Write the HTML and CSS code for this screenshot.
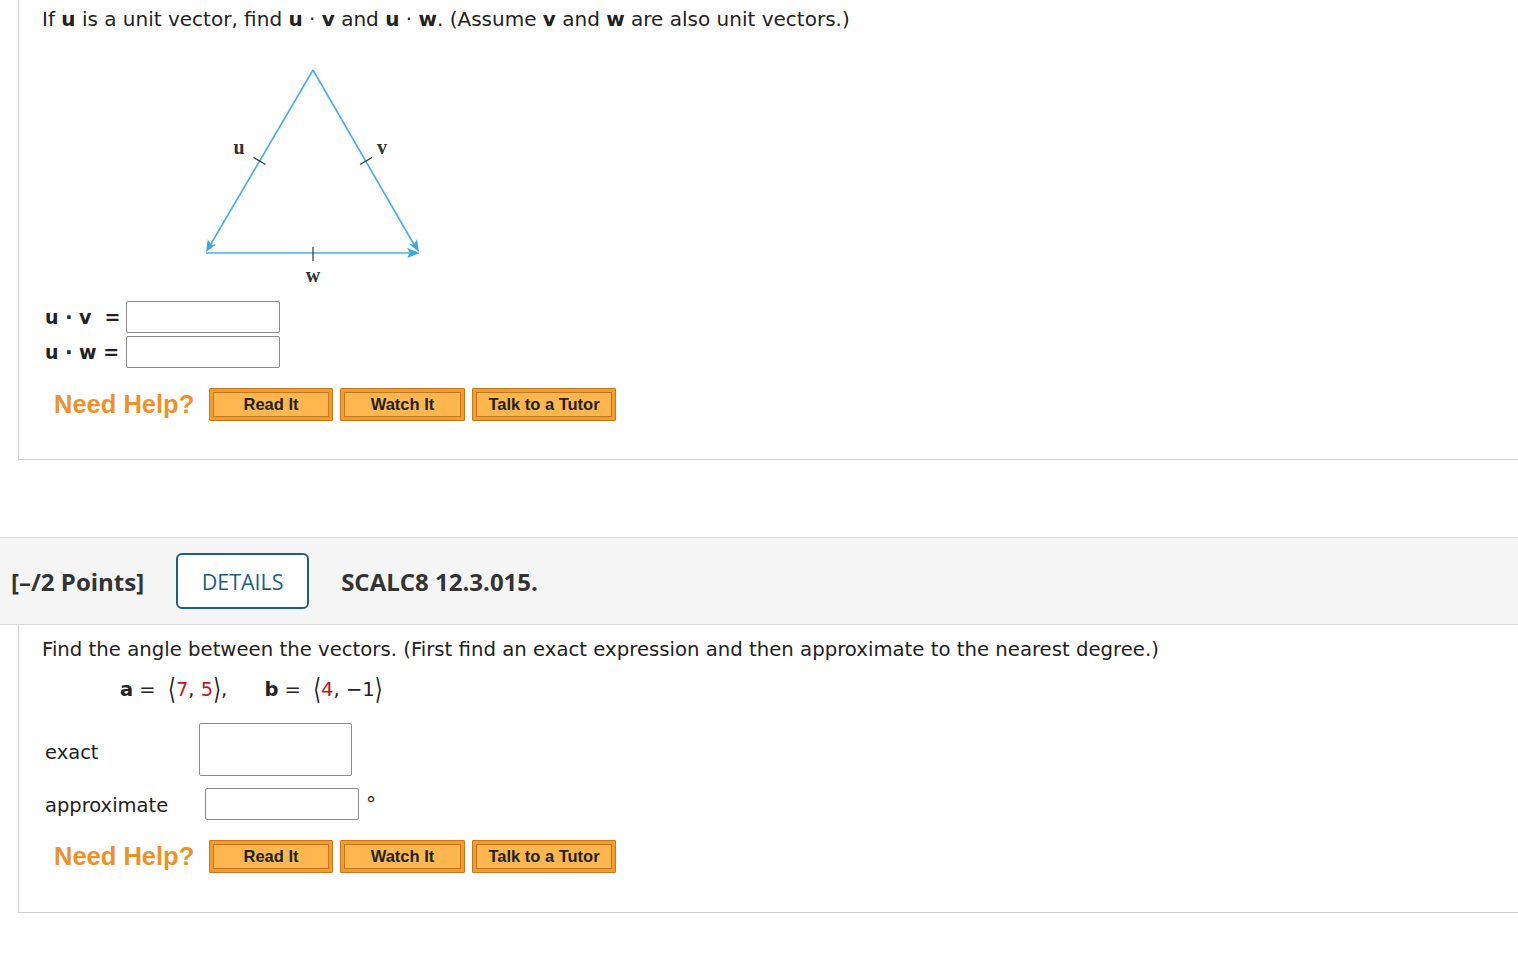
FILE: index.html
```html
<!DOCTYPE html>
<html>
<head>
<meta charset="utf-8">
<link rel="stylesheet" href="styles.css">
</head>
<body>
<div class="qbox first">
  <p class="qtext">If <b>u</b> is a unit vector, find <b>u</b> · <b>v</b> and <b>u</b> · <b>w</b>. (Assume <b>v</b> and <b>w</b> are also unit vectors.)</p>
  <div class="figure">
    <svg width="240" height="240" viewBox="0 0 240 240">
      <g stroke="#4aaee6" stroke-width="1.6" fill="none">
        <line x1="118" y1="15" x2="13" y2="194"/>
        <line x1="118" y1="15" x2="221" y2="193"/>
        <line x1="11" y1="198" x2="218" y2="198"/>
      </g>
      <g fill="#3aa6e4">
        <polygon points="11,197 21.4,189.2 16.5,190 12.8,184.2"/>
        <polygon points="224,197 221.9,184.3 219,189.5 214.1,188.9"/>
        <polygon points="225,198 212,193 215,198 212,203"/>
      </g>
      <g stroke="#333" stroke-width="1.2">
        <line x1="58.5" y1="102.5" x2="70.5" y2="109.5"/>
        <line x1="177" y1="102.5" x2="165" y2="109.5"/>
        <line x1="118" y1="192" x2="118" y2="206"/>
      </g>
      <g class="lbl">
        <text x="44" y="99" text-anchor="middle">u</text>
        <text x="187" y="99" text-anchor="middle">v</text>
        <text x="118" y="227" text-anchor="middle">w</text>
      </g>
    </svg>
  </div>
  <div class="answers">
    <div class="arow"><span class="alabel">u · v&nbsp; =</span><span class="inp"></span></div>
    <div class="arow"><span class="alabel">u · w =</span><span class="inp"></span></div>
  </div>
  <div class="help">
    <span class="needhelp">Need Help?</span>
    <span class="hbtn b1"><span>Read It</span></span>
    <span class="hbtn b2"><span>Watch It</span></span>
    <span class="hbtn b3"><span>Talk to a Tutor</span></span>
  </div>
</div>

<div class="qhead">
  <span class="points">[–/2 Points]</span>
  <span class="details">DETAILS</span>
  <span class="qid">SCALC8 12.3.015.</span>
</div>

<div class="qbox second">
  <p class="qtext t2">Find the angle between the vectors. (First find an exact expression and then approximate to the nearest degree.)</p>
  <p class="vecs"><b>a</b> = &nbsp;<span class="br">⟨</span><span class="red">7</span>, <span class="red">5</span><span class="br">⟩</span>, <span class="sp"></span><b>b</b> = &nbsp;<span class="br">⟨</span><span class="red">4</span>, −1<span class="br">⟩</span></p>
  <div class="exrow"><span class="rlabel">exact</span><span class="inp big"></span></div>
  <div class="aprow"><span class="rlabel">approximate</span><span class="inp small"></span><span class="deg">°</span></div>
  <div class="help h2">
    <span class="needhelp">Need Help?</span>
    <span class="hbtn b1"><span>Read It</span></span>
    <span class="hbtn b2"><span>Watch It</span></span>
    <span class="hbtn b3"><span>Talk to a Tutor</span></span>
  </div>
</div>
</body>
</html>
```
FILE: styles.css
```css
* { box-sizing: border-box; }
body {
  margin: 0;
  background: #fff;
  font-family: "DejaVu Sans", Verdana, sans-serif;
  color: #222;
}
.qbox {
  margin-left: 18px;
  border-left: 1px solid #d0d0d0;
  border-bottom: 1px solid #d0d0d0;
  padding-left: 23px;
}
.qbox.first { height: 460px; padding-top: 7px; }
.qbox.second { height: 288px; padding-top: 13px; }
.qtext {
  margin: 0;
  font-size: 20px;
  line-height: 24px;
  white-space: nowrap;
}
.qtext.t2 { font-size: 19.7px; }
.figure {
  margin: 24px 0 0 153px;
  height: 240px;
}
.figure svg { display: block; }
.lbl text {
  font-family: "Liberation Serif", "Times New Roman", serif;
  font-weight: bold;
  font-size: 20px;
  fill: #333;
}
.answers {
  margin-top: 6px;
  display: flex;
  flex-direction: column;
  gap: 3px;
}
.arow {
  display: flex;
  align-items: center;
}
.alabel {
  width: 84px;
  padding-left: 3px;
  font-weight: bold;
  font-size: 19px;
  white-space: nowrap;
}
.inp {
  display: inline-block;
  border: 1px solid #8c8c8c;
  border-radius: 2px;
  background: #fff;
  width: 154px;
  height: 32px;
}
.help {
  display: flex;
  align-items: center;
  gap: 7px;
  margin-top: 20px;
  margin-left: 12px;
}
.needhelp {
  font-family: "Liberation Sans", Arial, sans-serif;
  font-weight: bold;
  font-size: 25.5px;
  color: #ec922c;
  width: 148px;
  white-space: nowrap;
}
.hbtn {
  display: inline-flex;
  height: 33px;
  padding: 3px;
  background: #f39b2f;
  border: 1px solid #c97818;
  border-radius: 1px;
}
.hbtn span {
  flex: 1;
  display: flex;
  align-items: center;
  justify-content: center;
  background: #fdb74e;
  border: 1px solid #c7761c;
  font-family: "Liberation Sans", Arial, sans-serif;
  font-weight: bold;
  font-size: 16.5px;
  color: #222;
  white-space: nowrap;
}
.b1 { width: 124px; }
.b2 { width: 125px; }
.b3 { width: 144px; }
.qhead {
  margin-top: 77px;
  height: 88px;
  background: #f5f5f5;
  border-top: 1px solid #dcdcdc;
  border-bottom: 1px solid #dcdcdc;
  display: flex;
  align-items: center;
  padding-left: 11px;
  font-family: "Open Sans", sans-serif;
  color: #333;
}
.points {
  font-weight: bold;
  font-size: 24px;
}
.details {
  margin-left: 32px;
  width: 133px;
  height: 56px;
  border: 2px solid #1d5f82;
  border-radius: 6px;
  background: #fff;
  color: #1d5f82;
  font-size: 21.5px;
  display: flex;
  align-items: center;
  justify-content: center;
}
.qid {
  margin-left: 32px;
  font-weight: bold;
  font-size: 24px;
}
.vecs {
  margin: 15px 0 0 78px;
  font-size: 19.5px;
  line-height: 24px;
  white-space: nowrap;
}
.br {
  display: inline-block;
  transform: scaleY(1.45);
  font-size: 20px;
}
.red { color: #c8141e; }
.sp { display: inline-block; width: 31px; }
.exrow, .aprow {
  display: flex;
  align-items: center;
}
.exrow { margin-top: 21px; }
.aprow { margin-top: 12px; }
.rlabel {
  font-size: 19.5px;
  padding-left: 3px;
}
.exrow .rlabel { width: 157px; padding-top: 5px; }
.aprow .rlabel { width: 163px; padding-top: 2px; }
.inp.big { width: 153px; height: 53px; }
.inp.small { width: 154px; height: 32px; }
.deg { margin-left: 7px; font-size: 20px; align-self: flex-start; margin-top: 4px; }
.h2 { margin-top: 20px; }
```
